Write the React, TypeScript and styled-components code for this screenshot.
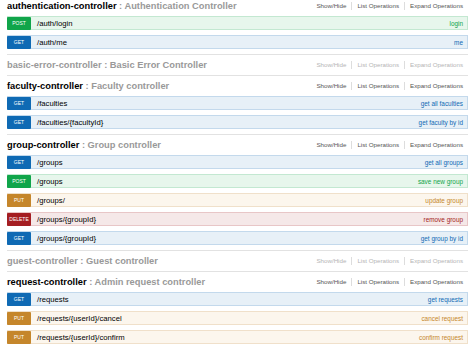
import React from "react";
import styled, { createGlobalStyle } from "styled-components";

type Method = "get" | "post" | "put" | "delete";

interface Operation {
  method: Method;
  path: string;
  summary: string;
}

interface Resource {
  name: string;
  description: string;
  operations: Operation[];
}

const resources: Resource[] = [
  {
    name: "authentication-controller",
    description: "Authentication Controller",
    operations: [
      { method: "post", path: "/auth/login", summary: "login" },
      { method: "get", path: "/auth/me", summary: "me" },
    ],
  },
  {
    name: "basic-error-controller",
    description: "Basic Error Controller",
    operations: [],
  },
  {
    name: "faculty-controller",
    description: "Faculty controller",
    operations: [
      { method: "get", path: "/faculties", summary: "get all faculties" },
      { method: "get", path: "/faculties/{facultyId}", summary: "get faculty by id" },
    ],
  },
  {
    name: "group-controller",
    description: "Group controller",
    operations: [
      { method: "get", path: "/groups", summary: "get all groups" },
      { method: "post", path: "/groups", summary: "save new group" },
      { method: "put", path: "/groups/", summary: "update group" },
      { method: "delete", path: "/groups/{groupId}", summary: "remove group" },
      { method: "get", path: "/groups/{groupId}", summary: "get group by id" },
    ],
  },
  {
    name: "guest-controller",
    description: "Guest controller",
    operations: [],
  },
  {
    name: "request-controller",
    description: "Admin request controller",
    operations: [
      { method: "get", path: "/requests", summary: "get requests" },
      { method: "put", path: "/requests/{userId}/cancel", summary: "cancel request" },
      { method: "put", path: "/requests/{userId}/confirm", summary: "confirm request" },
    ],
  },
];

const palette: Record<Method, { main: string; bg: string; border: string }> = {
  get: { main: "#0f6ab4", bg: "#e7f0f7", border: "#c3d9ec" },
  post: { main: "#10a54a", bg: "#e7f6ec", border: "#c3e8d1" },
  put: { main: "#c5862b", bg: "#fcf6ed", border: "#f0e0ca" },
  delete: { main: "#a41e22", bg: "#f5e8e8", border: "#e8c6c7" },
};

export default function App() {
  return (
    <>
      <GlobalStyle />
      <Resources>
        {resources.map((resource) => {
          const empty = resource.operations.length === 0;
          return (
            <ResourceItem key={resource.name}>
              <Heading>
                <Title>
                  <Name empty={empty}>{resource.name}</Name>
                  <Description> : {resource.description}</Description>
                </Title>
                <Options empty={empty}>
                  <Option>Show/Hide</Option>
                  <Option>List Operations</Option>
                  <Option last>Expand Operations</Option>
                </Options>
              </Heading>
              {!empty && (
                <Endpoints>
                  {resource.operations.map((op, index) => (
                    <Endpoint key={index} method={op.method}>
                      <MethodBadge method={op.method}>{op.method}</MethodBadge>
                      <Path>{op.path}</Path>
                      <Summary method={op.method}>{op.summary}</Summary>
                    </Endpoint>
                  ))}
                </Endpoints>
              )}
            </ResourceItem>
          );
        })}
      </Resources>
    </>
  );
}

const GlobalStyle = createGlobalStyle`
  body {
    margin: 0;
    background: #fff;
    font-family: "Liberation Sans", Arial, sans-serif;
  }
`;

const Resources = styled.ul`
  list-style: none;
  margin: -4px 0 0;
  padding: 0 6px 0 7px;
`;

const ResourceItem = styled.li`
  border-bottom: 1px solid #e2e2e2;
`;

const Heading = styled.div`
  height: 20px;
  display: flex;
  align-items: center;
  justify-content: space-between;
`;

const Title = styled.h2`
  margin: 0;
  font-size: 9.3px;
  font-weight: 700;
  white-space: nowrap;
`;

const Name = styled.span<{ empty: boolean }>`
  color: ${({ empty }) => (empty ? "#999" : "#000")};
`;

const Description = styled.span`
  color: #999;
`;

const Options = styled.ul<{ empty: boolean }>`
  list-style: none;
  margin: 0;
  padding: 0 5px 0 0;
  display: flex;
  align-items: center;
  font-size: 6.2px;
  color: ${({ empty }) => (empty ? "#b5b5b5" : "#555")};
`;

const Option = styled.li<{ last?: boolean }>`
  padding: ${({ last }) => (last ? "0 0 0 5px" : "0 5px")};
  border-right: ${({ last }) => (last ? "none" : "1px solid #ddd")};
  line-height: 8px;
  &:first-child {
    padding-left: 0;
  }
`;

const Endpoints = styled.ul`
  list-style: none;
  margin: 0;
  padding: 0 0 5px;
  display: flex;
  flex-direction: column;
  gap: 5px;
`;

const Endpoint = styled.li<{ method: Method }>`
  height: 14px;
  box-sizing: border-box;
  display: flex;
  align-items: center;
  background: ${({ method }) => palette[method].bg};
  border: 1px solid ${({ method }) => palette[method].border};
`;

const MethodBadge = styled.span<{ method: Method }>`
  width: 24px;
  height: 13px;
  margin-left: -1px;
  flex-shrink: 0;
  display: flex;
  align-items: center;
  justify-content: center;
  border-radius: 1px;
  background: ${({ method }) => palette[method].main};
  color: #fff;
  font-size: 5px;
  text-transform: uppercase;
`;

const Path = styled.span`
  margin-left: 6px;
  font-size: 7.7px;
  color: #000;
  flex: 1;
`;

const Summary = styled.span<{ method: Method }>`
  padding-right: 4px;
  font-size: 6.4px;
  color: ${({ method }) => palette[method].main};
`;
